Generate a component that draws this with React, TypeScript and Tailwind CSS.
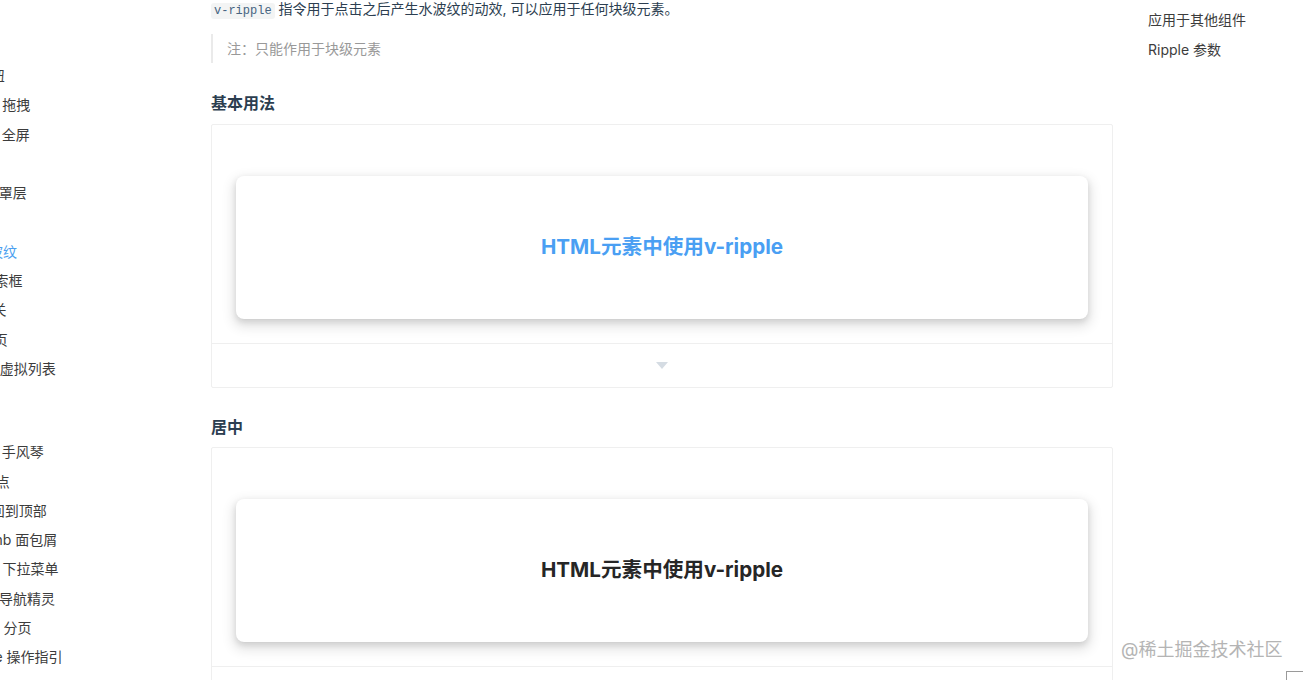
import React from 'react';

const font = { fontFamily: 'Inter, "Noto Sans CJK SC", sans-serif' };

type NavItem = { label: string; active?: boolean } | null;

const navTop: NavItem[] = [
  { label: 'Button 按钮' },
  { label: 'Draggable 拖拽' },
  { label: 'Fullscreen 全屏' },
  null,
  { label: 'Overlay 遮罩层' },
  null,
  { label: 'Ripple 水波纹', active: true },
  { label: 'Search 搜索框' },
  { label: 'Switch 开关' },
  { label: 'Tabs 标签页' },
  { label: 'VirtualList 虚拟列表' },
];

const navBottom: NavItem[] = [
  { label: 'Accordion 手风琴' },
  { label: 'Anchor 锚点' },
  { label: 'BackTop 回到顶部' },
  { label: 'Breadcrumb 面包屑' },
  { label: 'Dropdown 下拉菜单' },
  { label: 'NavSprite 导航精灵' },
  { label: 'Pagination 分页' },
  { label: 'Tour Guide 操作指引' },
];

function NavList({ items }: { items: NavItem[] }) {
  return (
    <>
      {items.map((item, i) =>
        item ? (
          <div
            key={i}
            className={`whitespace-nowrap text-[14px] leading-[29.3px] ${
              item.active ? 'text-[#4b9ff0]' : 'text-[#3c3c3c]'
            }`}
          >
            {item.label}
          </div>
        ) : (
          <div key={i} className="h-[29.3px]" />
        )
      )}
    </>
  );
}

function Caret() {
  return (
    <svg width="12" height="8" viewBox="0 0 12 8">
      <path d="M0 0h12L6 7z" fill="#d5dce3" />
    </svg>
  );
}

function Demo({ title, blue }: { title: string; blue?: boolean }) {
  return (
    <div className="border border-[#efefef] rounded-[2px]">
      <div className="px-[24px] pt-[51px] pb-[24px]">
        <div className="h-[143px] rounded-[8px] bg-white flex items-center justify-center shadow-[0_1px_2px_-2px_rgba(0,0,0,0.16),0_3px_6px_0_rgba(0,0,0,0.12),0_5px_12px_4px_rgba(0,0,0,0.09)]">
          <span className={`text-[20.6px] font-bold ${blue ? 'text-[#4a9ff3]' : 'text-[#262626]'}`}>{title}</span>
        </div>
      </div>
      <div className="border-t border-[#efefef] h-[44px] flex items-center justify-center">
        <Caret />
      </div>
    </div>
  );
}

export default function App() {
  return (
    <div className="relative w-[1303px] h-[680px] overflow-hidden bg-white" style={font}>
      <div className="flex">
        {/* Sidebar (scrolled sideways) */}
        <aside className="w-[211px] shrink-0 overflow-hidden">
          <div className="-ml-[70px] pt-[61px]">
            <NavList items={navTop} />
            <div className="h-[54px]" />
            <NavList items={navBottom} />
          </div>
        </aside>

        {/* Main */}
        <main className="w-[902px] shrink-0">
          <p className="h-[18px] text-[14px] leading-[18px] text-[#2c3e50]">
            <code
              className="bg-[#f3f4f4] rounded-[3px] px-[3px] py-[1px] text-[12px] leading-[14px] text-[#476582]"
              style={{ fontFamily: '"Liberation Mono", monospace' }}
            >
              v-ripple
            </code>{' '}
            指令用于点击之后产生水波纹的动效, 可以应用于任何块级元素。
          </p>
          <blockquote className="mt-[16px] border-l-2 border-[#eaeaea] pl-[14px] text-[14px] leading-[29px] text-[#999]">
            注：只能作用于块级元素
          </blockquote>

          <h3 className="mt-[28px] mb-[9px] text-[16px] leading-[24px] font-bold text-[#2c3e50]">基本用法</h3>
          <Demo title="HTML元素中使用v-ripple" blue />

          <h3 className="mt-[27px] mb-[8px] text-[16px] leading-[24px] font-bold text-[#2c3e50]">居中</h3>
          <Demo title="HTML元素中使用v-ripple" />
        </main>

        {/* Right outline */}
        <aside className="pl-[35px] pt-[5px]">
          <div className="text-[14px] leading-[30px] text-[#3c3c3c] whitespace-nowrap">应用于其他组件</div>
          <div className="text-[14px] leading-[30px] text-[#3c3c3c] whitespace-nowrap">Ripple 参数</div>
        </aside>
      </div>

      {/* Watermark */}
      <div className="absolute left-[1121px] top-[638px] text-[18px] leading-[24px] text-[#b4b4b4] whitespace-nowrap">
        @稀土掘金技术社区
      </div>
      <div className="absolute left-[1286px] top-[671px] w-[20px] h-[14px] border border-[#9a9a9a] bg-white" />
    </div>
  );
}
